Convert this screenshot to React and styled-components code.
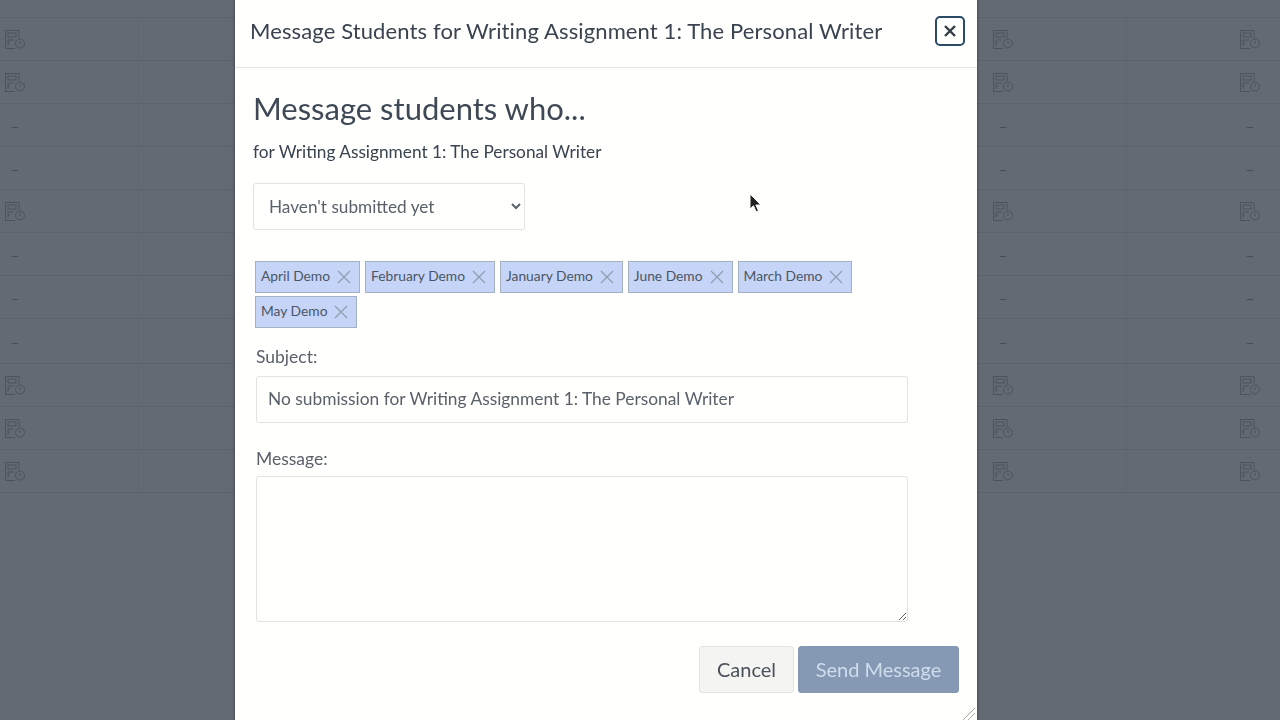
import React from "react"
import styled, { createGlobalStyle } from "styled-components"

const GlobalStyle = createGlobalStyle`
  html, body {
    margin: 0;
    height: 720px;
    overflow: hidden;
    background: #636a74;
    font-family: Lato, "Open Sans", sans-serif;
  }
`

const Page = styled.div`
  position: relative;
  width: 1280px;
  height: 720px;
  overflow: hidden;
`

const Gradebook = styled.div`
  margin-left: -108px;
  padding-top: 17px;
  filter: blur(0.7px);
`

const Row = styled.div`
  display: flex;
  height: ${({ $tall }) => ($tall ? 44 : 42)}px;
  border-top: 1px solid #5b626c;
  &:last-child {
    border-bottom: 1px solid #5b626c;
  }
`

const Cell = styled.div`
  flex: 0 0 247px;
  height: 100%;
  padding-top: 1px;
  display: flex;
  align-items: center;
  justify-content: center;
  border-right: 1px solid #5f6670;
  box-sizing: border-box;
  color: #464c55;
  font-size: 16px;
`

const Overlay = styled.div`
  position: absolute;
  top: 0;
  left: 235px;
  width: 742px;
  height: 720px;
  background: #fffffd;
  box-shadow: 0 0 3px rgba(40, 44, 52, 0.7);
  color: #3a4350;
  filter: blur(0.35px);
`

const Header = styled.header`
  height: 68px;
  box-sizing: border-box;
  display: flex;
  align-items: center;
  justify-content: space-between;
  padding: 0 12px 6px 15px;
  border-bottom: 1px solid #e4e4e2;
`

const Title = styled.h2`
  margin: 0;
  font-size: 22px;
  font-weight: 400;
  letter-spacing: 0.12px;
`

const CloseButton = styled.button`
  width: 30px;
  height: 30px;
  padding: 0;
  display: flex;
  align-items: center;
  justify-content: center;
  background: #fffffd;
  border: 2px solid #2b4a68;
  border-radius: 5px;
  color: #333b44;
`

const Body = styled.div`
  padding: 19px 18px 0;
`

const Heading = styled.h1`
  margin: 0;
  font-size: 31px;
  line-height: 42px;
  font-weight: 400;
  color: #3f4855;
`

const Sub = styled.p`
  margin: 12px 0 0;
  font-size: 17.25px;
  line-height: 22px;
`

const Select = styled.select`
  display: block;
  width: 272px;
  height: 47px;
  margin-top: 20px;
  padding: 0 6px 0 11px;
  box-sizing: border-box;
  background: #fffffd;
  border: 1px solid #e2e2de;
  border-radius: 3px;
  color: #5a616b;
  font: 400 17.2px Lato, sans-serif;
`

const Form = styled.div`
  padding-left: 3px;
`

const Tags = styled.div`
  display: flex;
  flex-wrap: wrap;
  gap: 3px 5px;
  width: 640px;
  margin: 31px 0 0 -1px;
`

const Tag = styled.span`
  display: flex;
  align-items: center;
  gap: 7px;
  height: 32px;
  padding: 0 8px 3px 5px;
  box-sizing: border-box;
  background: #c6d4f7;
  border: 1px solid #a4b1c2;
  color: #4a5665;
  font-size: 13.8px;
  svg {
    margin-top: 3px;
    color: #8f9caf;
  }
`

const Label = styled.label`
  display: block;
  margin-top: ${({ $top }) => $top}px;
  color: #5a616b;
  font-size: 17.5px;
  line-height: 22px;
`

const TextInput = styled.input`
  display: block;
  width: 652px;
  height: 47px;
  margin-top: 8px;
  padding: 0 11px 2px;
  box-sizing: border-box;
  background: #fffffd;
  border: 1px solid #e2e2de;
  border-radius: 3px;
  color: #5a616b;
  font: 400 17.35px Lato, sans-serif;
`

const MessageBox = styled.textarea`
  display: block;
  width: 652px;
  height: 146px;
  margin-top: 6px;
  box-sizing: border-box;
  background: #fffffd;
  border: 1px solid #e2e2de;
  border-radius: 3px;
  resize: vertical;
`

const Footer = styled.div`
  display: flex;
  justify-content: flex-end;
  gap: 4px;
  margin-top: 24px;
`

const Button = styled.button`
  height: 47px;
  box-sizing: border-box;
  border-radius: 3px;
  padding: 0 0 2px;
  font: 400 20px Lato, sans-serif;
`

const CancelButton = styled(Button)`
  width: 95px;
  background: #f4f4f2;
  border: 1px solid #e2e2de;
  color: #4a515b;
`

const SendButton = styled(Button)`
  width: 161px;
  background: #8599b4;
  border: 1px solid #8599b4;
  color: #cfdcec;
`

const ResizeGrip = styled.svg`
  position: absolute;
  right: 2px;
  bottom: 0;
  color: #a8aaa8;
`

const Pointer = styled.svg`
  position: absolute;
  left: 748px;
  top: 193px;
`

const DocClockIcon = () => (
  <svg width="22" height="22" viewBox="0 0 22 22" fill="none" stroke="#4d535d" strokeWidth="1">
    <path d="M15 9V1.5H1.5V19.5H11" />
    <rect x="4" y="4" width="8" height="4" />
    <path d="M4 11h6M4 14h2M4 11v6" />
    <circle cx="16" cy="14.5" r="4.5" />
    <path d="M16 12v3" />
  </svg>
)

const CrossIcon = ({ size = 14 }) => (
  <svg width={size} height={size} viewBox="0 0 14 14" stroke="currentColor" strokeWidth="1.2" fill="none">
    <path d="M1 1l12 12M13 1L1 13" />
  </svg>
)

const rows = ["icon", "icon", "dash", "dash", "icon", "dash", "dash", "dash", "icon", "icon", "icon"]
// the middle columns sit behind the dialog, so they stay empty
const columns = [true, false, false, false, true, true]
const sections = ["April Demo", "February Demo", "January Demo", "June Demo", "March Demo", "May Demo"]

const App = () => {
  return (
    <Page>
      <GlobalStyle />
      <Gradebook>
        {rows.map((kind, i) => (
          <Row key={i} $tall={i === 7}>
            {columns.map((visible, col) => (
              <Cell key={col}>{visible && (kind === "icon" ? <DocClockIcon /> : "–")}</Cell>
            ))}
          </Row>
        ))}
      </Gradebook>
      <Overlay>
        <Header>
          <Title>Message Students for Writing Assignment 1: The Personal Writer</Title>
          <CloseButton aria-label="Close">
            <svg width="14" height="14" viewBox="0 0 14 14" stroke="currentColor" strokeWidth="2.4" fill="none">
              <path d="M2 2l10 10M12 2L2 12" />
            </svg>
          </CloseButton>
        </Header>
        <Body>
          <Heading>Message students who...</Heading>
          <Sub>for Writing Assignment 1: The Personal Writer</Sub>
          <Select defaultValue="Haven't submitted yet">
            <option>Haven't submitted yet</option>
          </Select>
          <Form>
            <Tags>
              {sections.map((name) => (
                <Tag key={name}>
                  {name}
                  <CrossIcon />
                </Tag>
              ))}
            </Tags>
            <Label $top={18}>Subject:</Label>
            <TextInput defaultValue="No submission for Writing Assignment 1: The Personal Writer" />
            <Label $top={25}>Message:</Label>
            <MessageBox />
          </Form>
          <Footer>
            <CancelButton>Cancel</CancelButton>
            <SendButton>Send Message</SendButton>
          </Footer>
        </Body>
        <ResizeGrip width="13" height="13" viewBox="0 0 13 13" stroke="currentColor" fill="none">
          <path d="M1 13L13 1M6 13l7-7" />
        </ResizeGrip>
      </Overlay>
      <Pointer width="14" height="21" viewBox="0 0 14 21">
        <path d="M2 1v15l3.5-3.2 2.6 6 2.4-1-2.6-5.8H13z" fill="#222" stroke="#fff" strokeWidth="1" />
      </Pointer>
    </Page>
  )
}

export default App
